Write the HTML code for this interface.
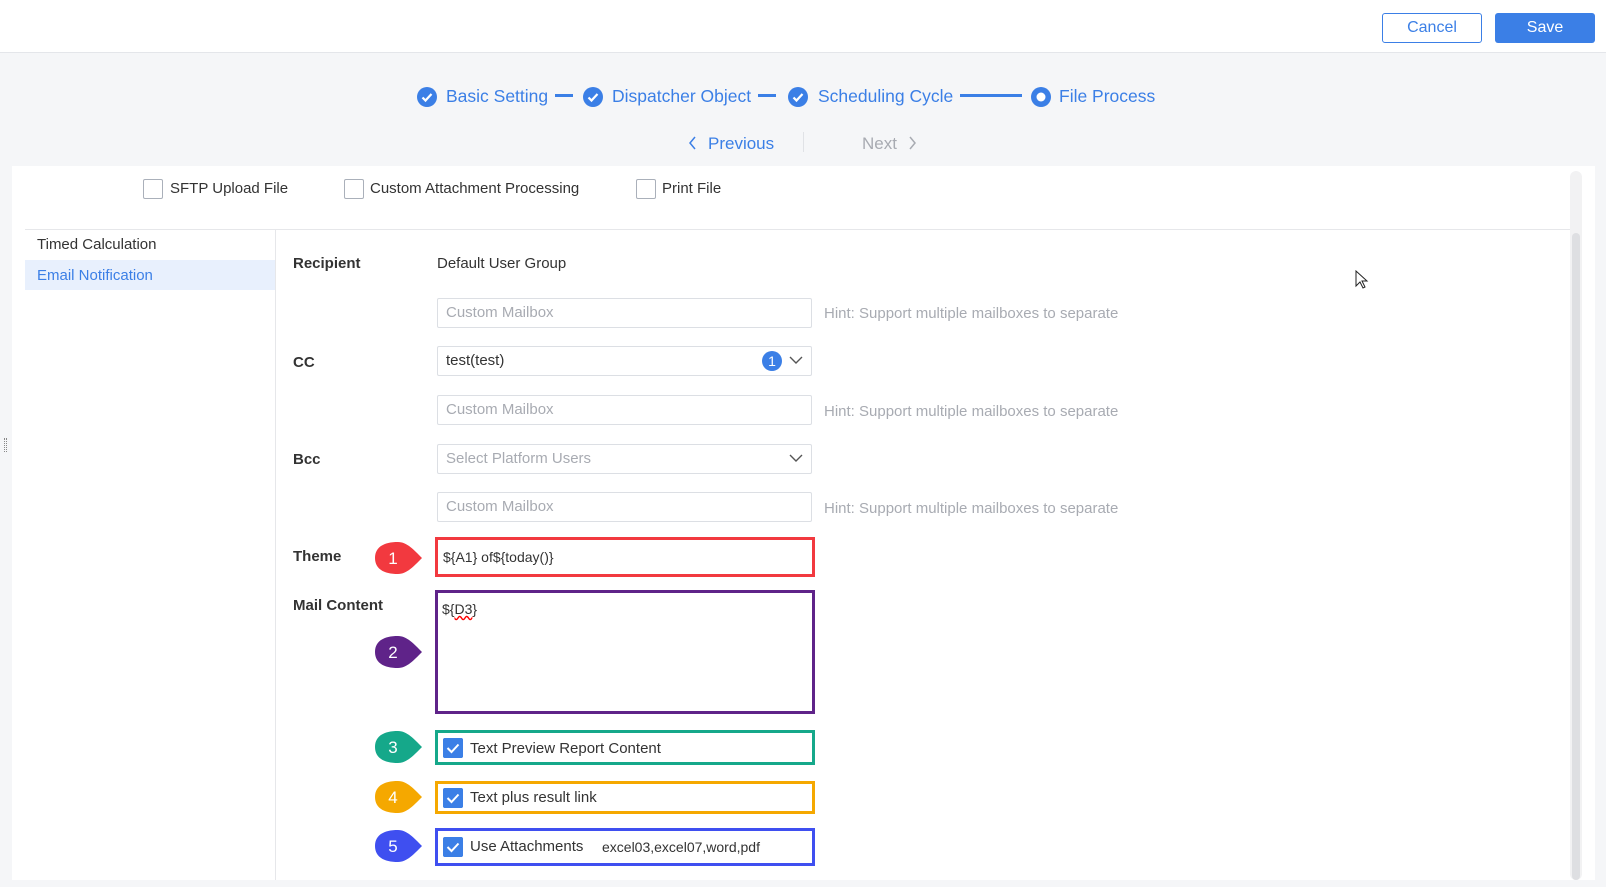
<!DOCTYPE html>
<html><head><meta charset="utf-8"><style>
*{box-sizing:border-box;margin:0;padding:0}
body{width:1606px;height:887px;background:#f5f6f8;font-family:"Liberation Sans",Arial,sans-serif;position:relative;overflow:hidden;color:#333}
.a{position:absolute}
.hdr{left:0;top:0;width:1606px;height:53px;background:#fff;border-bottom:1px solid #e4e6ea}
.btn{top:13px;height:30px;width:100px;border-radius:3px;font-size:16px;text-align:center;line-height:28px}
.step{top:86px;font-size:17.5px;color:#3b7fe6;white-space:nowrap}
.ln{height:3px;background:#3b7fe6;top:94px}
.panel{left:12px;top:166px;width:1583px;height:714px;background:#fff}
.cb{width:20px;height:20px;border:1px solid #aab0ba;border-radius:2px;background:#fff}
.t15{font-size:15px;white-space:nowrap}
.lbl{font-size:15px;font-weight:bold;color:#333;left:293px}
.inp{left:437px;width:375px;height:30px;border:1px solid #dcdfe4;border-radius:2px;font-size:15px;color:#a8abb2;padding-left:8px;line-height:28px;background:#fff}
.hint{left:824px;font-size:15px;color:#a8abb2}
.box{left:435px;width:380px;border:3px solid}
.chk{width:20px;height:20px;background:#3b7fe6;border-radius:2px}
.mk{left:374px;width:50px;height:38px}
</style></head><body>
<div class="a hdr"></div>
<div class="a btn" style="left:1382px;border:1px solid #3b7fe6;color:#3b7fe6;background:#fff">Cancel</div>
<div class="a btn" style="left:1495px;background:#3b7fe6;color:#fff;line-height:30px">Save</div>

<svg class="a" style="left:416px;top:86px" width="22" height="22" viewBox="0 0 22 22"><circle cx="11" cy="11" r="10" fill="#3b7fe6"/><path d="M6.5 11.5l3 3 6-6.5" stroke="#fff" stroke-width="2.2" fill="none"/></svg>
<div class="a step" style="left:446px">Basic Setting</div>
<div class="a ln" style="left:555px;width:18px"></div>
<svg class="a" style="left:582px;top:86px" width="22" height="22" viewBox="0 0 22 22"><circle cx="11" cy="11" r="10" fill="#3b7fe6"/><path d="M6.5 11.5l3 3 6-6.5" stroke="#fff" stroke-width="2.2" fill="none"/></svg>
<div class="a step" style="left:612px">Dispatcher Object</div>
<div class="a ln" style="left:758px;width:18px"></div>
<svg class="a" style="left:787px;top:86px" width="22" height="22" viewBox="0 0 22 22"><circle cx="11" cy="11" r="10" fill="#3b7fe6"/><path d="M6.5 11.5l3 3 6-6.5" stroke="#fff" stroke-width="2.2" fill="none"/></svg>
<div class="a step" style="left:818px">Scheduling Cycle</div>
<div class="a ln" style="left:960px;width:62px"></div>
<svg class="a" style="left:1030px;top:86px" width="22" height="22" viewBox="0 0 22 22"><circle cx="11" cy="11" r="10" fill="#3b7fe6"/><circle cx="11" cy="11" r="4.5" fill="#fff"/></svg>
<div class="a step" style="left:1059px">File Process</div>

<svg class="a" style="left:687px;top:135px" width="12" height="16"><path d="M8 2L3 8l5 6" stroke="#3b7fe6" stroke-width="1.5" fill="none"/></svg>
<div class="a step" style="left:708px;top:134px;font-size:17px">Previous</div>
<div class="a" style="left:803px;top:132px;width:1px;height:20px;background:#e0e2e6"></div>
<div class="a step" style="left:862px;top:134px;font-size:17px;color:#a8abb2">Next</div>
<svg class="a" style="left:906px;top:135px" width="12" height="16"><path d="M4 2l5 6-5 6" stroke="#a8abb2" stroke-width="1.5" fill="none"/></svg>

<div class="a panel"></div>
<div class="a" style="left:1570px;top:171px;width:12px;height:709px;background:#f2f2f3;border-radius:6px"></div>
<div class="a" style="left:1572px;top:233px;width:8px;height:647px;background:#dedfe2;border-radius:4px"></div>

<div class="a cb" style="left:143px;top:179px"></div><div class="a t15" style="left:170px;top:180px">SFTP Upload File</div>
<div class="a cb" style="left:344px;top:179px"></div><div class="a t15" style="left:370px;top:180px">Custom Attachment Processing</div>
<div class="a cb" style="left:636px;top:179px"></div><div class="a t15" style="left:662px;top:180px">Print File</div>

<div class="a" style="left:25px;top:229px;width:1545px;height:1px;background:#e6e7ea"></div>
<div class="a" style="left:275px;top:229px;width:1px;height:651px;background:#e6e7ea"></div>
<div class="a t15" style="left:37px;top:236px">Timed Calculation</div>
<div class="a" style="left:25px;top:260px;width:250px;height:30px;background:#e8f0fd"></div>
<div class="a t15" style="left:37px;top:267px;color:#3b7fe6">Email Notification</div>

<div class="a lbl" style="top:255px">Recipient</div>
<div class="a t15" style="left:437px;top:255px">Default User Group</div>
<div class="a inp" style="top:298px">Custom Mailbox</div><div class="a hint" style="top:305px">Hint: Support multiple mailboxes to separate</div>

<div class="a lbl" style="top:354px">CC</div>
<div class="a inp" style="top:346px;color:#333">test(test)</div>
<div class="a" style="left:762px;top:351px;width:20px;height:20px;border-radius:50%;background:#3b7fe6;color:#fff;font-size:14px;text-align:center;line-height:20px">1</div>
<svg class="a" style="left:788px;top:355px" width="16" height="10"><path d="M2 2l6 6 6-6" stroke="#555" stroke-width="1.4" fill="none"/></svg>
<div class="a inp" style="top:395px">Custom Mailbox</div><div class="a hint" style="top:403px">Hint: Support multiple mailboxes to separate</div>

<div class="a lbl" style="top:451px">Bcc</div>
<div class="a inp" style="top:444px">Select Platform Users</div>
<svg class="a" style="left:788px;top:453px" width="16" height="10"><path d="M2 2l6 6 6-6" stroke="#555" stroke-width="1.4" fill="none"/></svg>
<div class="a inp" style="top:492px">Custom Mailbox</div><div class="a hint" style="top:500px">Hint: Support multiple mailboxes to separate</div>

<div class="a lbl" style="top:548px">Theme</div>
<div class="a box" style="top:537px;height:40px;border-color:#f2393f"></div>
<div class="a t15" style="left:443px;top:549px;font-size:14px">${A1} of${today()}</div>

<div class="a lbl" style="top:597px">Mail Content</div>
<div class="a box" style="top:590px;height:124px;border-color:#5f2389"></div>
<div class="a t15" style="left:442px;top:601px;font-size:14px">${<span style="text-decoration:underline wavy red">D3</span>}</div>

<div class="a box" style="top:730px;height:35px;border-color:#15a88a"></div>
<div class="a box" style="top:781px;height:33px;border-color:#f5a800"></div>
<div class="a box" style="top:828px;height:38px;border-color:#3f4ff0"></div>
<svg class="a chk" style="left:443px;top:738px" viewBox="0 0 20 20"><rect width="20" height="20" rx="2" fill="#3b7fe6"/><path d="M4.5 10l4 4 7-7.5" stroke="#fff" stroke-width="2" fill="none"/></svg>
<div class="a t15" style="left:470px;top:740px">Text Preview Report Content</div>
<svg class="a chk" style="left:443px;top:788px" viewBox="0 0 20 20"><rect width="20" height="20" rx="2" fill="#3b7fe6"/><path d="M4.5 10l4 4 7-7.5" stroke="#fff" stroke-width="2" fill="none"/></svg>
<div class="a t15" style="left:470px;top:789px">Text plus result link</div>
<svg class="a chk" style="left:443px;top:837px" viewBox="0 0 20 20"><rect width="20" height="20" rx="2" fill="#3b7fe6"/><path d="M4.5 10l4 4 7-7.5" stroke="#fff" stroke-width="2" fill="none"/></svg>
<div class="a t15" style="left:470px;top:838px">Use Attachments</div>
<div class="a t15" style="left:602px;top:839px;font-size:14px">excel03,excel07,word,pdf</div>

<svg class="a mk" style="top:539px" viewBox="0 0 50 38"><path d="M24 3C10 3 1 8 1 19s9 16 23 16c9 0 16-8 24-16C40 11 33 3 24 3z" fill="#f2393f"/><text x="19" y="25" fill="#fff" font-size="17" font-family="Liberation Sans" text-anchor="middle">1</text></svg>
<svg class="a mk" style="top:633px" viewBox="0 0 50 38"><path d="M24 3C10 3 1 8 1 19s9 16 23 16c9 0 16-8 24-16C40 11 33 3 24 3z" fill="#5f2389"/><text x="19" y="25" fill="#fff" font-size="17" font-family="Liberation Sans" text-anchor="middle">2</text></svg>
<svg class="a mk" style="top:728px" viewBox="0 0 50 38"><path d="M24 3C10 3 1 8 1 19s9 16 23 16c9 0 16-8 24-16C40 11 33 3 24 3z" fill="#15a88a"/><text x="19" y="25" fill="#fff" font-size="17" font-family="Liberation Sans" text-anchor="middle">3</text></svg>
<svg class="a mk" style="top:778px" viewBox="0 0 50 38"><path d="M24 3C10 3 1 8 1 19s9 16 23 16c9 0 16-8 24-16C40 11 33 3 24 3z" fill="#f5a800"/><text x="19" y="25" fill="#fff" font-size="17" font-family="Liberation Sans" text-anchor="middle">4</text></svg>
<svg class="a mk" style="top:827px" viewBox="0 0 50 38"><path d="M24 3C10 3 1 8 1 19s9 16 23 16c9 0 16-8 24-16C40 11 33 3 24 3z" fill="#3f4ff0"/><text x="19" y="25" fill="#fff" font-size="17" font-family="Liberation Sans" text-anchor="middle">5</text></svg>

<svg class="a" style="left:1355px;top:270px" width="14" height="20"><path d="M1 1v15l4-4 3 6 2-1-3-6h5z" fill="#fff" stroke="#222" stroke-width="1"/></svg>
<div class="a" style="left:4px;top:438px;width:3px;height:14px;border-left:1px dotted #888;border-right:1px dotted #888"></div>
</body></html>
